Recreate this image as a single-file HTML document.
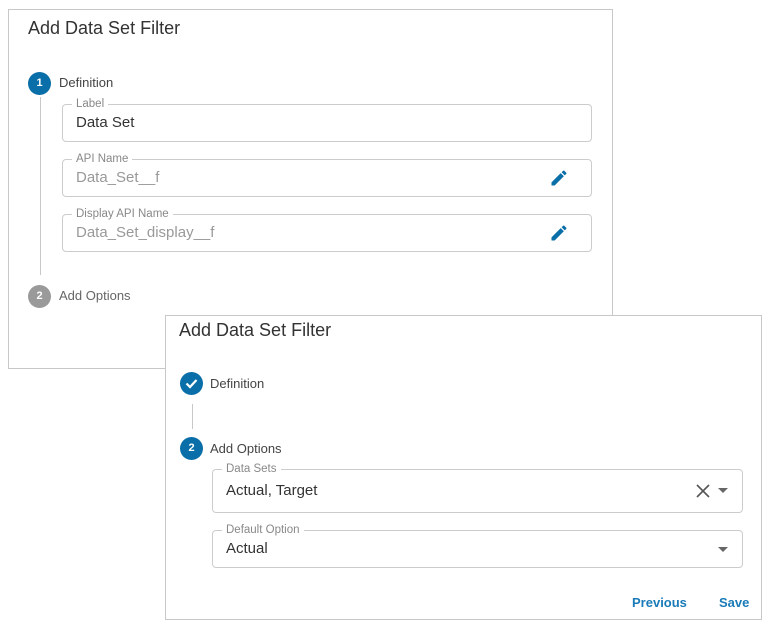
<!DOCTYPE html>
<html><head><style>
body{margin:0;width:768px;height:628px;background:#fff;position:relative;font-family:"Liberation Sans",sans-serif;overflow:hidden}
.card{position:absolute;background:#fff;border:1px solid #c8c8c8;box-sizing:border-box}
.t{position:absolute;font-size:18px;color:#333;white-space:nowrap}
.step{position:absolute;width:23px;height:23px;border-radius:50%;background:#0a6ea8;color:#fff;font-size:11px;font-weight:bold;text-align:center;line-height:23px}
.sl{position:absolute;font-size:13px;color:#444;white-space:nowrap}
.vl{position:absolute;width:1px;background:#c8c8c8}
.f{position:absolute;border:1px solid #ccc;border-radius:4px;box-sizing:border-box}
.lg{position:absolute;top:-8px;left:9px;background:#fff;padding:0 4px;font-size:11.5px;color:#888;line-height:14px}
.v{position:absolute;left:13px;font-size:15px;color:#333;white-space:nowrap}
.g{color:#999}
.ico{position:absolute}
.btn{position:absolute;font-size:13px;color:#1a7bb8;font-weight:bold}
</style></head><body>
<div class="card" style="left:8px;top:9px;width:605px;height:360px">
 <div class="t" style="left:19px;top:8px">Add Data Set Filter</div>
</div>
<div class="step" style="left:28px;top:72px">1</div>
<div class="sl" style="left:59px;top:75px">Definition</div>
<div class="vl" style="left:40px;top:97px;height:178px"></div>
<div class="f" style="left:62px;top:104px;width:530px;height:38px"><span class="lg">Label</span><span class="v" style="top:9px">Data Set</span></div>
<div class="f" style="left:62px;top:159px;width:530px;height:38px"><span class="lg">API Name</span><span class="v g" style="top:9px">Data_Set__f</span>
<svg class="ico" style="left:486px;top:8px" width="20" height="20" viewBox="0 0 24 24"><path fill="#0a6ea8" d="M3 17.25V21h3.75L17.81 9.94l-3.75-3.75L3 17.25zM20.71 7.04a1 1 0 000-1.41l-2.34-2.34a1 1 0 00-1.41 0l-1.83 1.83 3.75 3.75 1.83-1.83z"/></svg></div>
<div class="f" style="left:62px;top:214px;width:530px;height:38px"><span class="lg">Display API Name</span><span class="v g" style="top:9px">Data_Set_display__f</span>
<svg class="ico" style="left:486px;top:8px" width="20" height="20" viewBox="0 0 24 24"><path fill="#0a6ea8" d="M3 17.25V21h3.75L17.81 9.94l-3.75-3.75L3 17.25zM20.71 7.04a1 1 0 000-1.41l-2.34-2.34a1 1 0 00-1.41 0l-1.83 1.83 3.75 3.75 1.83-1.83z"/></svg></div>
<div class="step" style="left:28px;top:285px;background:#9a9a9a">2</div>
<div class="sl" style="left:59px;top:288px;color:#666">Add Options</div>

<div class="card" style="left:165px;top:315px;width:597px;height:305px">
 <div class="t" style="left:13px;top:4px">Add Data Set Filter</div>
</div>
<div class="step" style="left:180px;top:372px"><svg width="23" height="23" viewBox="0 0 23 23"><path d="M6.5 11.5l3.5 3.5 6.5-7" stroke="#fff" stroke-width="2.2" fill="none"/></svg></div>
<div class="sl" style="left:210px;top:376px">Definition</div>
<div class="vl" style="left:192px;top:404px;height:25px"></div>
<div class="step" style="left:180px;top:437px">2</div>
<div class="sl" style="left:210px;top:441px">Add Options</div>
<div class="f" style="left:212px;top:469px;width:531px;height:44px"><span class="lg">Data Sets</span><span class="v" style="top:12px">Actual, Target</span>
<svg class="ico" style="left:483px;top:14px" width="14" height="14" viewBox="0 0 14 14"><path d="M1 1L13 13M13 1L1 13" stroke="#555" stroke-width="1.6"/></svg>
<svg class="ico" style="left:505px;top:18px" width="10" height="6"><path d="M0 0h10L5 5z" fill="#666"/></svg></div>
<div class="f" style="left:212px;top:530px;width:531px;height:38px"><span class="lg">Default Option</span><span class="v" style="top:9px">Actual</span>
<svg class="ico" style="left:505px;top:16px" width="10" height="6"><path d="M0 0h10L5 5z" fill="#666"/></svg></div>
<div class="btn" style="left:632px;top:595px">Previous</div>
<div class="btn" style="left:719px;top:595px">Save</div>
</body></html>
